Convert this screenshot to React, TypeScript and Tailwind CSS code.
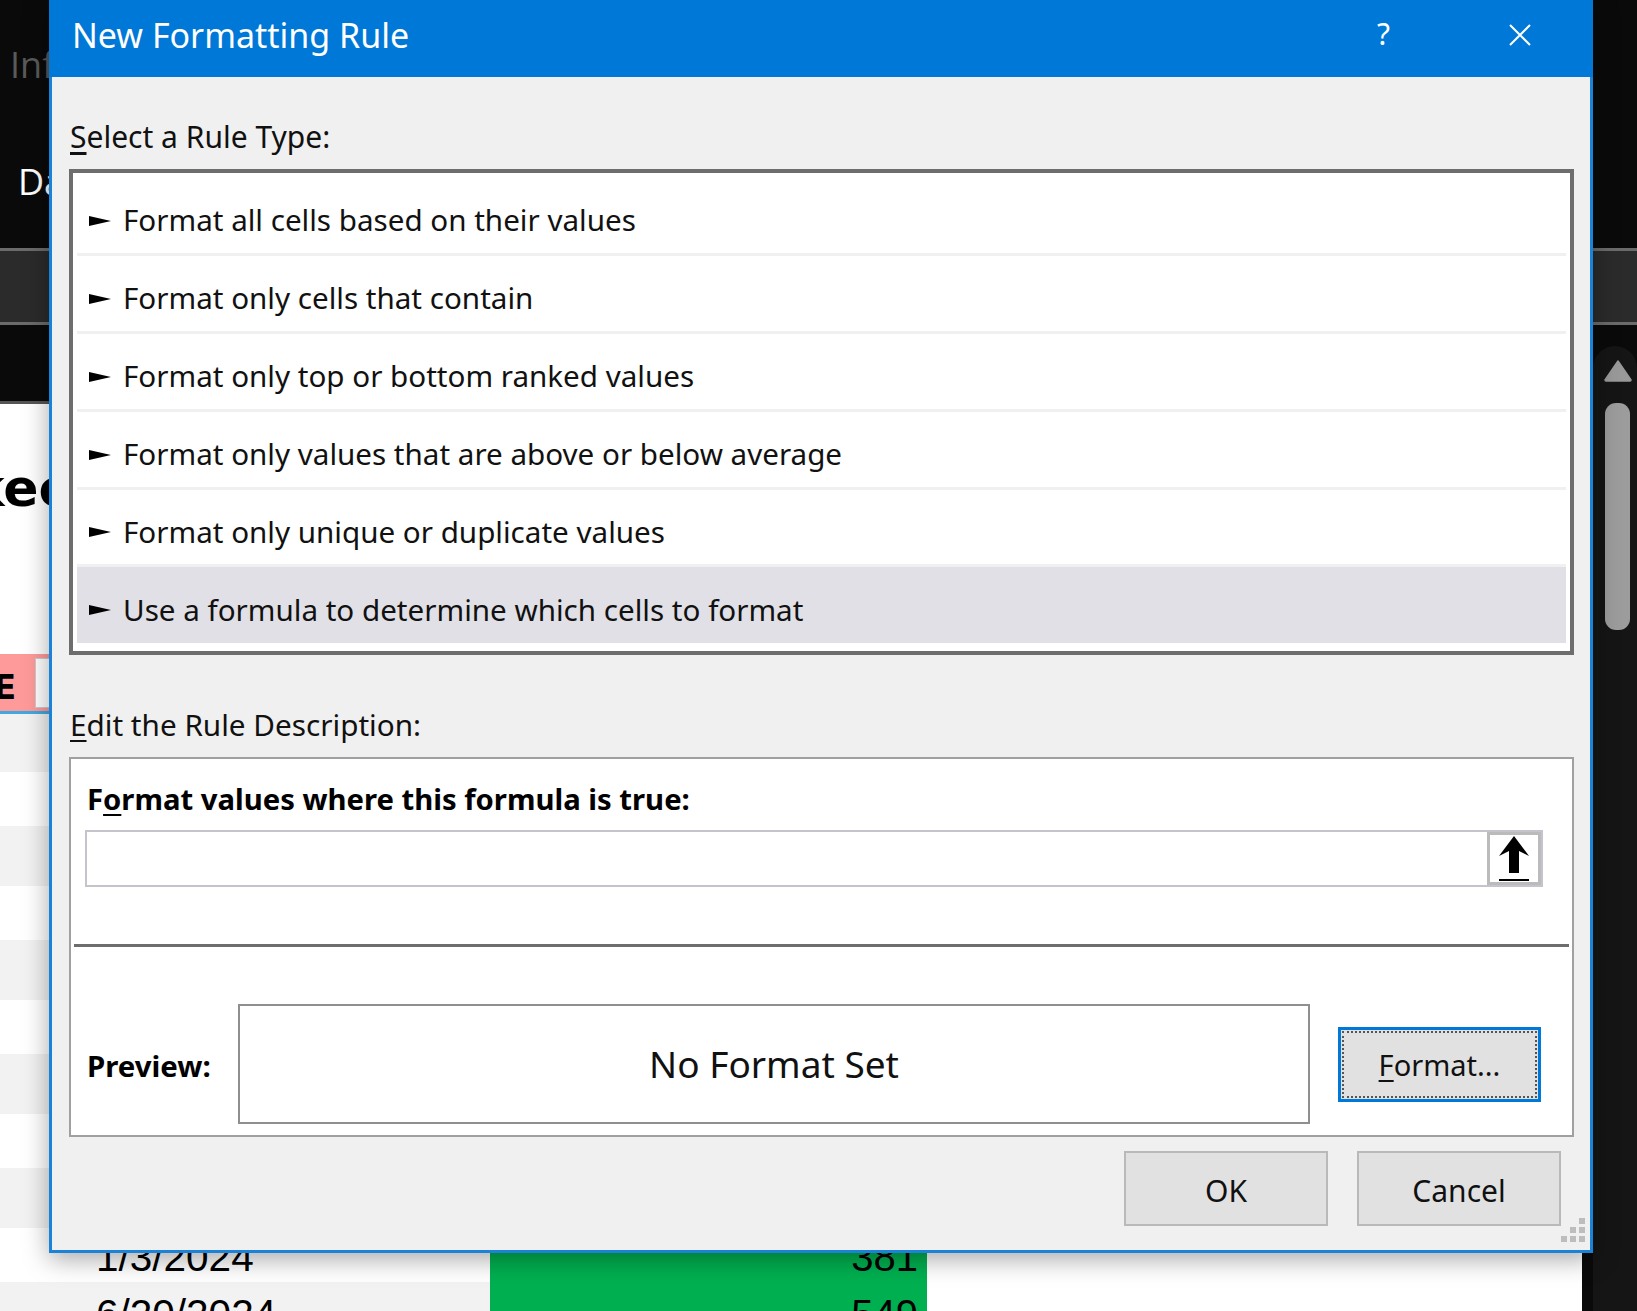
const ruleTypes = [
  "Format all cells based on their values",
  "Format only cells that contain",
  "Format only top or bottom ranked values",
  "Format only values that are above or below average",
  "Format only unique or duplicate values",
  "Use a formula to determine which cells to format",
];

const tableRows = [
  { h: "h-[58px]", shade: true, date: "", value: "" },
  { h: "h-[54px]", shade: false, date: "", value: "" },
  { h: "h-[60px]", shade: true, date: "", value: "" },
  { h: "h-[54px]", shade: false, date: "", value: "" },
  { h: "h-[60px]", shade: true, date: "", value: "" },
  { h: "h-[54px]", shade: false, date: "", value: "" },
  { h: "h-[60px]", shade: true, date: "", value: "" },
  { h: "h-[54px]", shade: false, date: "", value: "" },
  { h: "h-[60px]", shade: true, date: "", value: "" },
  { h: "h-[54px]", shade: false, date: "1/3/2024", value: "381" },
  { h: "h-[60px]", shade: true, date: "6/20/2024", value: "549" },
];

function Background() {
  return (
    <div className="flex h-full flex-col">
      <div className="h-[248px] shrink-0 pl-[10px] pt-[42px] text-[36px] leading-[46px] font-['Open_Sans',sans-serif]">
        <div className="text-[#5a5a5a]">Inf</div>
        <div className="ml-[8px] mt-[71px] text-white">Da</div>
      </div>
      <div className="h-[77px] shrink-0 border-y-[3px] border-[#6b6b6b] bg-[#2b2b2b]" />
      <div className="flex min-h-0 flex-1">
        <div className="flex w-[1582px] shrink-0 flex-col">
          <div className="h-[79px] shrink-0 border-b-[3px] border-[#555555]" />
          <div className="h-[250px] shrink-0 overflow-hidden bg-white pt-[54px] font-['DejaVu_Sans',sans-serif] text-[52px] font-bold leading-[60px] text-black">
            <div className="-ml-[30px] whitespace-nowrap">kee</div>
          </div>
          <div className="flex h-[60px] shrink-0 items-center border-b-[3px] border-[#3fa9e0] bg-[#ff9a9a]">
            <span className="-ml-[7px] pt-[10px] font-['DejaVu_Sans',sans-serif] text-[34px] font-bold text-black">E</span>
            <div className="ml-[19px] h-[50px] w-[40px] border border-[#cccccc] bg-white" />
          </div>
          <div className="flex-1 bg-white font-['Liberation_Sans',sans-serif] text-[40px] leading-[46px] text-black">
            {tableRows.map((row, i) => (
              <div key={i} className={`flex ${row.h}`}>
                <div className={`flex w-[490px] shrink-0 items-center pl-[96px] pt-[4px] text-[40.5px] ${row.shade ? "bg-[#f2f2f2]" : "bg-white"}`}>
                  {row.date}
                </div>
                <div className="flex w-[437px] shrink-0 items-center justify-end bg-[#00b050] pr-[9px] pt-[4px]">{row.value}</div>
              </div>
            ))}
          </div>
        </div>
        <div className="flex min-w-0 flex-1 pl-[11px] pt-[21px]">
          <div className="flex w-full flex-col items-center rounded-t-[22px] bg-[#151515] pl-[5px] pt-[14px]">
            <svg width="28" height="22" viewBox="0 0 28 22">
              <path d="M14 1 L27 20 Q27 21 26 21 L2 21 Q1 21 1 20 Z" fill="#999999" stroke="#999999" strokeLinejoin="round" strokeWidth="1.5" />
            </svg>
            <div className="mt-[21px] h-[227px] w-[25px] rounded-[11px] bg-[#9c9c9c]" />
          </div>
        </div>
      </div>
    </div>
  );
}

function Button({ label, focused }: { label: React.ReactNode; focused?: boolean }) {
  if (focused) {
    return (
      <button className="h-[75px] w-[203px] border-[3px] border-[#0078d7] bg-[#e1e1e1] p-px text-[29px] text-[#111111]">
        <span className="flex h-full w-full items-center justify-center border-2 border-dotted border-[#555555] pt-[1px]">{label}</span>
      </button>
    );
  }
  return (
    <button className="flex h-[75px] w-[204px] items-center justify-center border-2 border-[#b9b9b9] bg-[#e1e1e1] pt-[3px] text-[30px] text-[#111111]">
      {label}
    </button>
  );
}

function Dialog() {
  return (
    <div className="absolute left-[49px] top-0 h-[1253px] w-[1544px] border-x-[3px] border-b-[3px] border-[#1a82d8] bg-[#f0f0f0] font-['Noto_Sans',sans-serif] text-[#111111] shadow-[0_6px_24px_rgba(0,0,0,0.35)]">
      <div className="-mx-[3px] flex h-[77px] items-center bg-[#0078d7] pb-[6px] pl-[23px] text-white">
        <span className="text-[34px]">New Formatting Rule</span>
        <span className="ml-auto mr-[119px] -translate-y-[2px] text-[30px]">?</span>
        <svg className="mr-[62px] -translate-y-[1px]" width="22" height="22" viewBox="0 0 22 22" fill="none" stroke="white" strokeWidth="2">
          <path d="M1 1 L21 21 M21 1 L1 21" />
        </svg>
      </div>
      <div className="pl-[17px] pr-[16px]">
        <div className="mt-[38px] h-[54px] pl-px text-[30px] leading-[44px]">
          <u className="underline-offset-4">S</u>elect a Rule Type:
        </div>
        <div className="flex h-[486px] flex-col border-4 border-[#6d6d6d] bg-white px-[4px] pt-[5px]">
          {ruleTypes.map((rule, i) => (
            <div
              key={rule}
              className={`flex shrink-0 items-center pl-[12px] pt-[10px] text-[29.6px] ${i === 5 ? "h-[76px] bg-[#e0e0e6]" : "border-b-[3px] border-[#f0f0f0]"} ${i === 4 ? "h-[77px]" : ""} ${i < 4 ? "h-[78px]" : ""}`}
            >
              <svg className="mr-[12px] shrink-0" width="22" height="10" viewBox="0 0 22 10">
                <path d="M0 0 L22 5 L0 10 Z" fill="#000000" />
              </svg>
              {rule}
            </div>
          ))}
        </div>
        <div className="mt-[47px] h-[55px] pl-px text-[29.7px] leading-[46px]">
          <u className="underline-offset-4">E</u>dit the Rule Description:
        </div>
        <div className="flex h-[380px] flex-col border-2 border-[#a0a0a0] bg-white px-[16px]">
          <div className="mt-[20px] h-[51px] text-[29.25px] font-bold leading-[40px] text-black">
            F<u className="underline-offset-4">o</u>rmat values where this formula is true:
          </div>
          <div className="-ml-[2px] flex h-[57px] w-[1458px] border-2 border-[#c4c4cc] bg-white">
            <div className="flex-1" />
            <div className="flex w-[54px] items-center justify-center border-[3px] border-[#bbbbbb] bg-white">
              <svg width="30" height="46" viewBox="0 0 30 46">
                <path d="M15 0 L30 20 L20 15 L20 37 L10 37 L10 15 L0 20 Z" fill="#000000" />
                <rect x="0" y="43" width="30" height="2" fill="#000000" />
              </svg>
            </div>
          </div>
          <div className="-mx-[13px] mt-[57px] h-[3px] shrink-0 bg-[#6d6d6d]" />
          <div className="mt-[57px] flex items-center">
            <span className="w-[151px] shrink-0 pt-[4px] text-[29.4px] font-bold text-black">Preview:</span>
            <div className="flex h-[120px] w-[1072px] items-center justify-center border-2 border-[#8f8f8f] bg-white text-[37px]">
              No Format Set
            </div>
            <div className="ml-[28px]">
              <Button focused label={<span><u className="underline-offset-4">F</u>ormat...</span>} />
            </div>
          </div>
        </div>
        <div className="mr-[13px] mt-[14px] flex justify-end gap-[29px]">
          <Button label="OK" />
          <Button label="Cancel" />
        </div>
      </div>
      <svg className="absolute bottom-[7px] right-[4px]" width="25" height="25" viewBox="0 0 25 25" fill="#bdbdbd">
        <rect x="18" y="0" width="6" height="6" />
        <rect x="9" y="9" width="6" height="6" />
        <rect x="18" y="9" width="6" height="6" />
        <rect x="0" y="18" width="6" height="6" />
        <rect x="9" y="18" width="6" height="6" />
        <rect x="18" y="18" width="6" height="6" />
      </svg>
    </div>
  );
}

export default function App() {
  return (
    <div className="relative h-[1311px] w-[1637px] overflow-hidden bg-[#0a0a0a]">
      <Background />
      <Dialog />
    </div>
  );
}
